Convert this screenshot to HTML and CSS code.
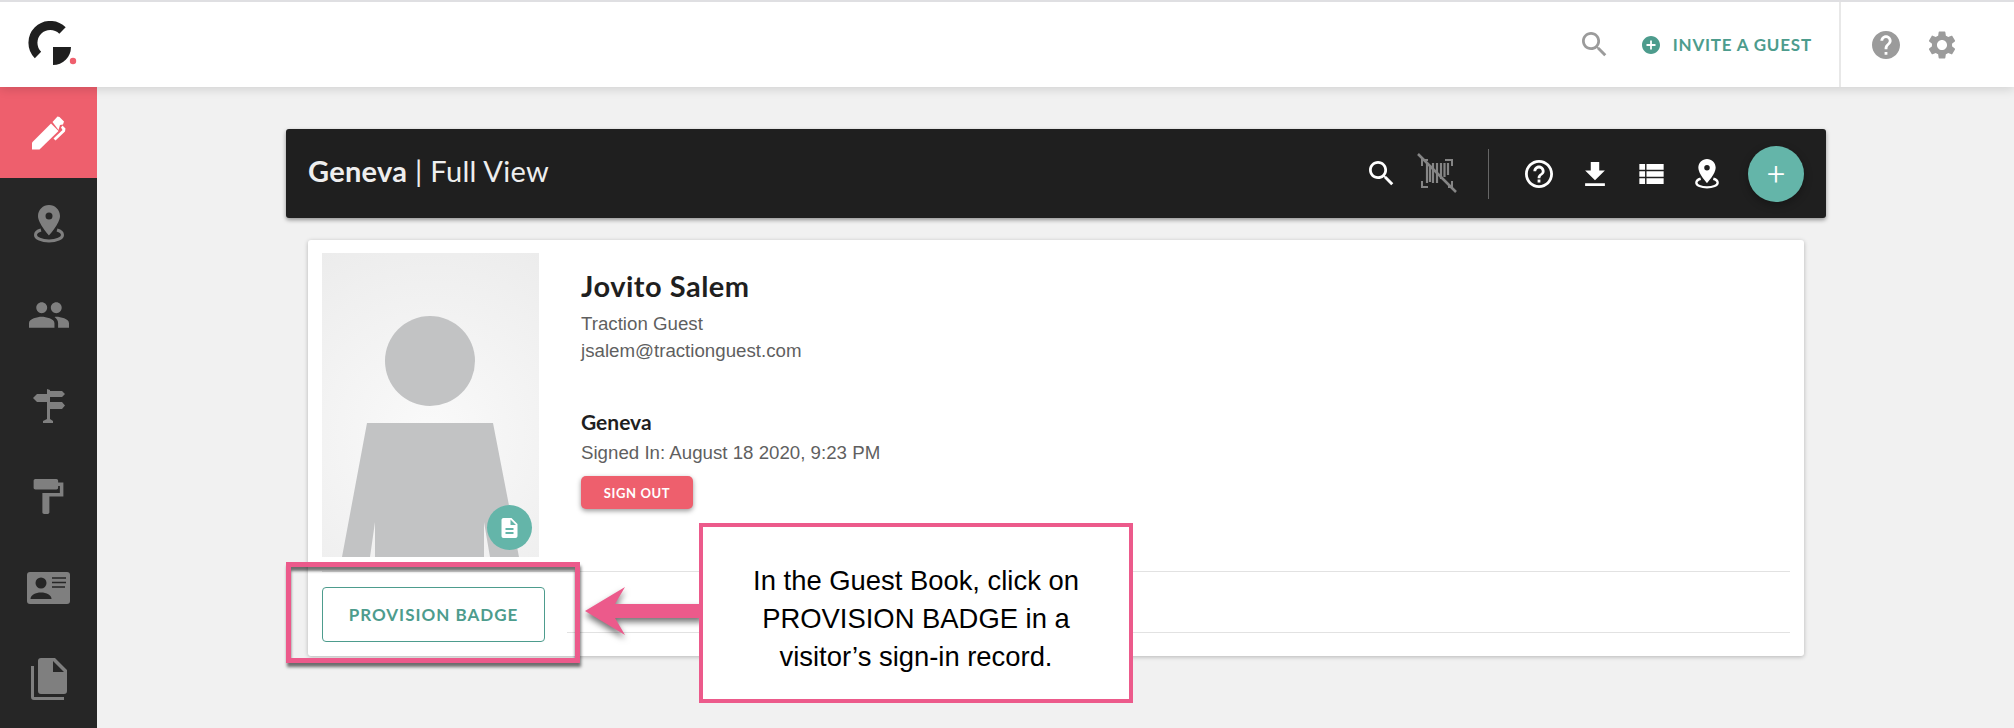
FILE: index.html
```html
<!DOCTYPE html>
<html lang="en">
<head>
  <meta charset="UTF-8">
  <title>Guest Book</title>
  <link rel="stylesheet" href="styles.css">
</head>
<body>
  <header class="topbar">
    <svg class="logo" viewBox="0 0 50 46">
      <path class="logo__arc" d="M35.500 9.500A17 17 0 1 0 11 34"/>
      <path class="logo__wedge" d="M26 26h18a18 18 0 0 1-18 18z"/>
      <circle class="logo__dot" cx="46" cy="40" r="3.200"/>
    </svg>
    <div class="topbar__actions">
      <svg class="icon icon--search-top" viewBox="3 3 18 18"><path d="M15.500 14h-.79l-.28-.27C15.410 12.590 16 11.110 16 9.500 16 5.910 13.090 3 9.500 3S3 5.910 3 9.500 5.910 16 9.500 16c1.610 0 3.090-.59 4.230-1.570l.27.28v.79l5 4.990L20.490 19l-4.990-5zm-6 0C7.010 14 5 11.990 5 9.500S7.010 5 9.500 5 14 7.010 14 9.500 11.990 14 9.500 14z"/></svg>
      <a class="invite">
        <svg class="icon icon--invite" viewBox="2 2 20 20"><path d="M12 2C6.480 2 2 6.480 2 12s4.480 10 10 10 10-4.480 10-10S17.520 2 12 2zm5 11h-4v4h-2v-4H7v-2h4V7h2v4h4v2z"/></svg>
        INVITE A GUEST
      </a>
    </div>
    <div class="topbar__tools">
      <svg class="icon icon--tool" viewBox="2 2 20 20"><path d="M12 2C6.480 2 2 6.480 2 12s4.480 10 10 10 10-4.480 10-10S17.520 2 12 2zm1 17h-2v-2h2v2zm2.070-7.750l-.9.920C13.450 12.900 13 13.500 13 15h-2v-.5c0-1.100.45-2.100 1.170-2.830l1.240-1.260c.37-.36.59-.86.59-1.410 0-1.100-.9-2-2-2s-2 .9-2 2H8c0-2.210 1.790-4 4-4s4 1.790 4 4c0 .88-.36 1.680-.93 2.250z"/></svg>
      <svg class="icon icon--tool" viewBox="2.500 2 19 20"><path d="M19.140 12.940c.04-.3.06-.61.06-.94 0-.32-.02-.64-.07-.94l2.030-1.580c.18-.14.23-.41.12-.61l-1.920-3.320c-.12-.22-.37-.29-.59-.22l-2.390.96c-.5-.38-1.030-.7-1.620-.94l-.36-2.540c-.04-.24-.24-.41-.48-.41h-3.840c-.24 0-.43.17-.47.41l-.36 2.540c-.59.24-1.130.57-1.620.94l-2.390-.96c-.22-.08-.47 0-.59.22L2.740 8.870c-.12.21-.08.47.12.61l2.030 1.580c-.05.3-.09.63-.09.94s.02.64.07.94l-2.030 1.580c-.18.14-.23.41-.12.61l1.920 3.320c.12.22.37.29.59.22l2.390-.96c.5.38 1.030.7 1.620.94l.36 2.540c.05.24.24.41.48.41h3.840c.24 0 .44-.17.47-.41l.36-2.540c.59-.24 1.130-.56 1.620-.94l2.390.96c.22.08.47 0 .59-.22l1.920-3.320c.12-.22.07-.47-.12-.61l-2.010-1.580zM12 15.600c-1.980 0-3.600-1.620-3.600-3.600s1.620-3.600 3.600-3.600 3.600 1.620 3.600 3.600-1.620 3.600-3.600 3.600z"/></svg>
    </div>
  </header>

  <div class="layout">
    <nav class="sidebar">
      <a class="sidebar__item sidebar__item--active">
        <svg class="nav-icon" width="34" height="34" viewBox="0 0 34 34">
          <path d="M0 33.500v-7L19 7.500l7.500 7.500L7.500 33.500z"/>
          <path d="M20.500 6l5-5.500 2 .5 4.500 4.500-1 3-3 .5-1.500 5z"/>
          <path d="M30.500 9.500l3 3-.5 3-9.500 9-2-2 9-8.500-1.500-2.500z"/>
        </svg>
      </a>
      <a class="sidebar__item">
        <svg class="nav-icon" width="30" height="38" viewBox="0 0 30 38">
          <path d="M15 0C9 0 4 4.800 4 11c0 7.500 11 19.500 11 19.500S26 18.500 26 11C26 4.800 21 0 15 0zm0 14.500a3.500 3.500 0 1 1 0-7 3.500 3.500 0 0 1 0 7z"/>
          <path class="nav-icon__ring" d="M7 25c-3.500 1-5.500 2.800-5.500 5 0 3.300 6 6 13.500 6s13.500-2.700 13.500-6c0-2.200-2-4-5.500-5"/>
        </svg>
      </a>
      <a class="sidebar__item">
        <svg class="nav-icon" width="40" height="40" viewBox="1 4 22 16"><path d="M16 11c1.660 0 2.990-1.340 2.990-3S17.660 5 16 5c-1.660 0-3 1.340-3 3s1.340 3 3 3zm-8 0c1.660 0 2.990-1.340 2.990-3S9.660 5 8 5C6.340 5 5 6.340 5 8s1.340 3 3 3zm0 2c-2.330 0-7 1.170-7 3.500V19h14v-2.500c0-2.330-4.670-3.500-7-3.500zm8 0c-.29 0-.62.02-.97.05 1.160.84 1.970 1.970 1.970 3.450V19h6v-2.500c0-2.330-4.670-3.500-7-3.500z"/></svg>
      </a>
      <a class="sidebar__item">
        <svg class="nav-icon" width="32" height="36" viewBox="0 0 32 36">
          <path d="M14 1l3 1v1h12l3 3-3 3H17v5h12l3 3.500-3 3.500H17v10l3 2v2H10v-2l4-2V14H4l-4-4 4-4h10z"/>
        </svg>
      </a>
      <a class="sidebar__item">
        <svg class="nav-icon" width="31" height="35" viewBox="4 2 17 20"><path d="M18 4V3c0-.55-.45-1-1-1H5c-.55 0-1 .45-1 1v4c0 .55.45 1 1 1h12c.55 0 1-.45 1-1V6h1v4H9v11c0 .55.45 1 1 1h2c.55 0 1-.45 1-1v-9h8V4h-3z"/></svg>
      </a>
      <a class="sidebar__item">
        <svg class="nav-icon" width="43" height="32" viewBox="0 0 43 32">
          <rect width="43" height="32" rx="3"/>
          <circle class="nav-icon__cut" cx="14" cy="11" r="5.500"/>
          <path class="nav-icon__cut" d="M3.500 27c0-4 5-6.500 10.500-6.500S24.500 23 24.500 27z"/>
          <path class="nav-icon__line" d="M25 6h14M25 10.500h14M25 15h13"/>
        </svg>
      </a>
      <a class="sidebar__item">
        <svg class="nav-icon nav-icon--copy" width="36" height="42" viewBox="0 0 36 42">
          <path d="M7 3a3 3 0 0 1 3-3H24L36 12V33a3 3 0 0 1-3 3H10a3 3 0 0 1-3-3zM22 3V14H33z"/>
          <path d="M0 8h3V39H33v3H3a3 3 0 0 1-3-3z"/>
        </svg>
      </a>
    </nav>

    <main class="content">
      <section class="panel-bar">
        <h1 class="panel-bar__title"><b>Geneva</b> | Full View</h1>
        <div class="panel-bar__tools">
          <svg class="icon icon--bar-search" viewBox="3 3 18 18"><path d="M15.500 14h-.79l-.28-.27C15.410 12.590 16 11.110 16 9.500 16 5.910 13.090 3 9.500 3S3 5.910 3 9.500 5.910 16 9.500 16c1.610 0 3.090-.59 4.230-1.570l.27.28v.79l5 4.990L20.490 19l-4.990-5zm-6 0C7.010 14 5 11.990 5 9.500S7.010 5 9.500 5 14 7.010 14 9.500 11.990 14 9.500 14z"/></svg>
          <svg class="icon--barcode" width="41" height="41" viewBox="0 0 41 41">
            <path class="barcode__frame" d="M5 13V7h6M28 7h7v6M35 28v6h-4M11 34H5v-6"/>
            <path class="barcode__bars" d="M10 10v20M13 12v17M16 10v20M20 10v20M24 10v16M27.500 10v14M31 10v12"/>
            <path class="barcode__slash" d="M1 1l38 38"/>
          </svg>
          <span class="panel-bar__divider"></span>
          <svg class="icon icon--bar-help" viewBox="2 2 20 20"><path d="M11 18h2v-2h-2v2zm1-16C6.480 2 2 6.480 2 12s4.480 10 10 10 10-4.480 10-10S17.520 2 12 2zm0 18c-4.410 0-8-3.590-8-8s3.590-8 8-8 8 3.590 8 8-3.590 8-8 8zm0-14c-2.210 0-4 1.790-4 4h2c0-1.100.9-2 2-2s2 .9 2 2c0 2-3 1.750-3 5h2c0-2.250 3-2.500 3-5 0-2.210-1.790-4-4-4z"/></svg>
          <svg class="icon icon--bar-download" viewBox="5 3 14 17"><path d="M19 9h-4V3H9v6H5l7 7 7-7zM5 18v2h14v-2H5z"/></svg>
          <svg class="icon icon--bar-list" viewBox="4 5 17 14"><path d="M4 14h4v-4H4v4zm0 5h4v-4H4v4zM4 9h4V5H4v4zm5 5h12v-4H9v4zm0 5h12v-4H9v4zM9 5v4h12V5H9z"/></svg>
          <svg class="icon--bar-pin" width="24" height="30" viewBox="0 0 30 38">
            <path d="M15 0C9 0 4 4.800 4 11c0 7.500 11 19.500 11 19.500S26 18.500 26 11C26 4.800 21 0 15 0zm0 14.500a3.500 3.500 0 1 1 0-7 3.500 3.500 0 0 1 0 7z"/>
            <path class="nav-icon__ring" d="M7 25c-3.500 1-5.500 2.800-5.500 5 0 3.300 6 6 13.500 6s13.500-2.700 13.500-6c0-2.200-2-4-5.500-5"/>
          </svg>
          <button class="fab">+</button>
        </div>
      </section>

      <section class="card">
        <div class="card__top">
          <div class="photo">
            <svg class="photo__person" viewBox="0 0 217 304">
              <circle cx="108" cy="108" r="45"/>
              <path d="M45 170H171L197 304H168L162 269V304H53V269L48 304H20z"/>
            </svg>
            <span class="photo__badge">
              <svg class="icon icon--note" viewBox="4 2 16 20"><path d="M14 2H6c-1.100 0-1.990.9-1.990 2L4 20c0 1.100.89 2 1.990 2H18c1.100 0 2-.9 2-2V8l-6-6zm2 16H8v-2h8v2zm0-4H8v-2h8v2zm-3-5V3.500L18.500 9H13z"/></svg>
            </span>
          </div>
          <div class="guest">
            <h2 class="guest__name">Jovito Salem</h2>
            <p class="guest__line">Traction Guest</p>
            <p class="guest__line">jsalem@tractionguest.com</p>
            <h3 class="guest__site">Geneva</h3>
            <p class="guest__line">Signed In: August 18 2020, 9:23 PM</p>
            <button class="btn-signout">SIGN OUT</button>
          </div>
        </div>
        <div class="card__actions">
          <button class="btn-provision">PROVISION BADGE</button>
          <span class="card__rule"></span>
        </div>
      </section>
    </main>
  </div>

  <!-- annotations drawn on top of the screenshot -->
  <div class="note-frame"></div>
  <svg class="note-arrow" width="130" height="60" viewBox="0 0 130 60">
    <path d="M2 29L42 5 32 22h88v14H32l10 17z"/>
  </svg>
  <div class="note-box">In the Guest Book, click on PROVISION BADGE in a visitor’s sign-in record.</div>
</body>
</html>
```

FILE: styles.css
```css
/* Reset */
*, *::after, *::before {
  margin: 0;
  padding: 0;
  box-sizing: border-box;
}

body {
  height: 728px;
  overflow: hidden;
  background-color: #f1f1f1;
  font-family: "Liberation Sans", Arial, sans-serif;
  position: relative;
}

button {
  border: 0;
  background: none;
  font: inherit;
}

.icon {
  display: block;
  fill: currentColor;
}

/* Top bar */
.topbar {
  height: 87px;
  display: flex;
  align-items: stretch;
  background-color: #fff;
  border-top: 2px solid #dfdfe2;
  box-shadow: 0 2px 10px rgba(0, 0, 0, 0.14);
  position: relative;
  z-index: 2;
}

.logo {
  width: 50px;
  height: 46px;
  margin: 19px 0 0 27px;
}

.logo__arc {
  fill: none;
  stroke: #1f1f1f;
  stroke-width: 9;
}

.logo__wedge {
  fill: #1f1f1f;
}

.logo__dot {
  fill: #ef5f6d;
}

.topbar__actions {
  margin-left: auto;
  display: flex;
  align-items: center;
  padding-right: 27px;
  border-right: 2px solid #e8e8e8;
}

.icon--search-top {
  width: 25px;
  height: 25px;
  color: #9b9b9b;
  margin-right: 35px;
}

.invite {
  display: flex;
  align-items: center;
  gap: 13px;
  color: #4d9c8d;
  font-family: Lato, sans-serif;
  font-size: 17px;
  font-weight: 700;
  letter-spacing: 0.8px;
}

.icon--invite {
  width: 18px;
  height: 18px;
}

.topbar__tools {
  display: flex;
  align-items: center;
  gap: 28px;
  padding: 0 58px 0 31px;
  color: #9b9b9b;
}

.icon--tool {
  width: 28px;
  height: 28px;
}

/* Sidebar */
.layout {
  display: flex;
  height: 641px;
}

.sidebar {
  width: 97px;
  flex-shrink: 0;
  background-color: #262626;
  display: flex;
  flex-direction: column;
}

.sidebar__item {
  height: 91px;
  flex-shrink: 0;
  display: flex;
  align-items: center;
  justify-content: center;
  color: #7f7f7f;
}

.sidebar__item--active {
  background-color: #ee5f6d;
  color: #fff;
}

.nav-icon {
  fill: currentColor;
}

.nav-icon--copy {
  fill-rule: evenodd;
}

.nav-icon__ring {
  fill: none;
  stroke: currentColor;
  stroke-width: 3;
}

.nav-icon__cut {
  fill: #262626;
}

.nav-icon__line {
  fill: none;
  stroke: #262626;
  stroke-width: 1.500;
}

/* Main */
.content {
  flex: 1;
  padding: 42px 188px 0 189px;
}

.panel-bar {
  height: 89px;
  display: flex;
  align-items: center;
  justify-content: space-between;
  padding: 0 22px 0 22px;
  background-color: #1f1f1f;
  border-radius: 3px;
  box-shadow: 0 2px 4px rgba(0, 0, 0, 0.4);
}

.panel-bar__title {
  color: #eee;
  font-family: Lato, sans-serif;
  font-size: 29px;
  font-weight: 400;
  letter-spacing: 0.3px;
  margin-top: -7px;
}

.panel-bar__title b {
  font-weight: 700;
}

.panel-bar__tools {
  display: flex;
  align-items: center;
  color: #fff;
  fill: #fff;
}

.icon--bar-search {
  width: 25px;
  height: 25px;
  margin-right: 23px;
}

.icon--barcode {
  margin-right: 30px;
}

.barcode__frame,
.barcode__bars,
.barcode__slash {
  fill: none;
  stroke: #858585;
}

.barcode__frame {
  stroke-width: 2;
}

.barcode__bars {
  stroke-width: 2.200;
}

.barcode__slash {
  stroke-width: 2.500;
}

.panel-bar__divider {
  width: 1px;
  height: 50px;
  background-color: #666;
  margin-right: 36px;
}

.icon--bar-help {
  width: 28px;
  height: 28px;
  margin-right: 32px;
}

.icon--bar-download {
  width: 20px;
  height: 24px;
  margin-right: 34px;
}

.icon--bar-list {
  width: 25px;
  height: 20px;
  margin-right: 31px;
}

.icon--bar-pin {
  margin-right: 29px;
}

.fab {
  width: 56px;
  height: 56px;
  border-radius: 50%;
  background-color: #64b5a9;
  color: #fff;
  font-family: Roboto, sans-serif;
  font-size: 32px;
  font-weight: 300;
  line-height: 52px;
  box-shadow: 0 3px 8px rgba(0, 0, 0, 0.3);
}

/* Guest card */
.card {
  height: 416px;
  margin: 22px 22px 0;
  padding: 13px 14px 0;
  background-color: #fff;
  border-radius: 3px;
  box-shadow: 0 1px 4px rgba(0, 0, 0, 0.25);
}

.card__top {
  display: flex;
  padding-bottom: 14px;
  border-bottom: 1px solid #e2e2e2;
}

.photo {
  width: 217px;
  height: 304px;
  flex-shrink: 0;
  background: radial-gradient(circle at 50% 60%, #fafafa, #ececec);
  position: relative;
}

.photo__person {
  display: block;
  width: 217px;
  height: 304px;
  fill: #c2c3c4;
}

.photo__badge {
  position: absolute;
  right: 7px;
  bottom: 7px;
  width: 45px;
  height: 45px;
  border-radius: 50%;
  background-color: #64b5a9;
  display: flex;
  align-items: center;
  justify-content: center;
  color: #fff;
}

.icon--note {
  width: 17px;
  height: 20px;
}

.guest {
  padding: 16px 0 0 42px;
}

.guest__name {
  font-family: Lato, sans-serif;
  font-size: 29px;
  font-weight: 700;
  letter-spacing: 0.5px;
  color: #1f1f1f;
  line-height: 34px;
  margin-bottom: 7px;
}

.guest__line {
  font-size: 18.700px;
  line-height: 27px;
  color: #5f5f5f;
}

.guest__site {
  font-family: Lato, sans-serif;
  font-size: 21px;
  font-weight: 700;
  color: #1f1f1f;
  line-height: 26px;
  margin: 45px 0 4px;
}

.btn-signout {
  display: block;
  width: 112px;
  height: 33px;
  margin-top: 10px;
  border-radius: 5px;
  background-color: #ee5f6d;
  color: #fff;
  font-family: Lato, sans-serif;
  font-size: 13px;
  font-weight: 700;
  letter-spacing: 0.6px;
  box-shadow: 0 2px 5px rgba(0, 0, 0, 0.4);
}

.card__actions {
  display: flex;
  padding-top: 15px;
}

.btn-provision {
  width: 223px;
  height: 55px;
  flex-shrink: 0;
  border: 1px solid #4d9c8d;
  border-radius: 4px;
  color: #4d9c8d;
  font-family: Lato, sans-serif;
  font-size: 17px;
  font-weight: 700;
  letter-spacing: 1px;
}

.card__rule {
  flex: 1;
  height: 1px;
  margin: 45px 0 0 22px;
  background-color: #e2e2e2;
}

/* Annotations */
.note-frame {
  position: absolute;
  left: 286px;
  top: 562px;
  width: 294px;
  height: 101px;
  border: 5px solid #ec5a8b;
  box-shadow: 1px 4px 3px rgba(0, 0, 0, 0.55), inset 0 4px 3px rgba(0, 0, 0, 0.55);
  z-index: 3;
}

.note-arrow {
  position: absolute;
  left: 583px;
  top: 582px;
  fill: #ec5a8b;
  filter: drop-shadow(0 4px 3px rgba(0, 0, 0, 0.55));
  z-index: 3;
}

.note-box {
  position: absolute;
  left: 699px;
  top: 523px;
  width: 434px;
  height: 180px;
  padding: 12px 40px 0;
  display: flex;
  align-items: center;
  text-align: center;
  background-color: #fff;
  border: 4px solid #ec5a8b;
  color: #000;
  font-size: 27.400px;
  line-height: 38px;
  z-index: 4;
}
```
